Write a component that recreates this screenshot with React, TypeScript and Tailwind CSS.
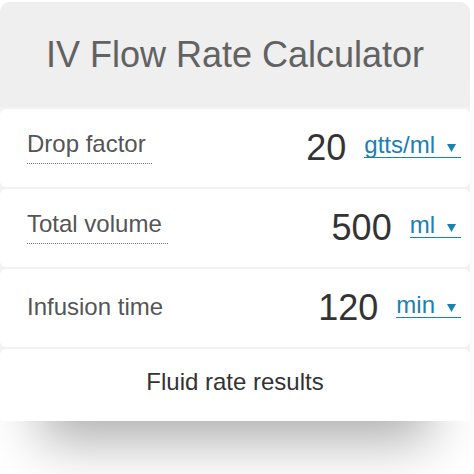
import React from 'react';

interface FieldRowProps {
  label: string;
  value: string;
  unit: string;
  hint?: boolean;
}

const Caret = () => (
  <svg width="9" height="8" viewBox="0 0 9 8" className="ml-[12px] mr-[5px] mb-[5px]">
    <path d="M0 0H9L4.5 8Z" fill="currentColor" />
  </svg>
);

const FieldRow: React.FC<FieldRowProps> = ({ label, value, unit, hint }) => (
  <div className="h-[78px] bg-white rounded-[6px] flex items-center justify-between pl-[27px] pr-[9px]">
    <span
      className={`text-[24px] text-[#555] leading-none pb-[3px] ${
        hint ? 'border-b border-dotted border-[#777] pr-[6px] pb-[7px]' : ''
      }`}
    >
      {label}
    </span>
    <div className="flex items-center">
      <span className="text-[36px] text-[#333] leading-none">{value}</span>
      <span className="ml-[18px] mb-[6px] text-[24px] text-[#1a80b6] leading-none border-b-[1.5px] border-[#1a80b6] flex items-end">
        {unit}
        <Caret />
      </span>
    </div>
  </div>
);

export default function App() {
  return (
    <div
      className="w-[474px] h-[474px] bg-white overflow-hidden pt-[2px]"
      style={{ fontFamily: '"Liberation Sans", Arial, sans-serif' }}
    >
      <div className="w-[470px] rounded-t-[10px] rounded-b-[2px] bg-[#f2f2f2] flex flex-col gap-[2px] shadow-[0_60px_50px_-40px_rgba(0,0,0,0.32)]">
        {/* title bar */}
        <div className="h-[105px] rounded-t-[10px] bg-[#efefef] flex items-center justify-center">
          <h1 className="text-[36px] text-[#626262] leading-none">IV Flow Rate Calculator</h1>
        </div>

        <FieldRow label="Drop factor" value="20" unit="gtts/ml" hint />
        <FieldRow label="Total volume" value="500" unit="ml" hint />
        <FieldRow label="Infusion time" value="120" unit="min" />

        <div className="h-[72px] bg-white rounded-t-[6px] rounded-b-[2px] flex items-center justify-center pb-[6px]">
          <span className="text-[24px] text-[#333] leading-none">Fluid rate results</span>
        </div>
      </div>
    </div>
  );
}
